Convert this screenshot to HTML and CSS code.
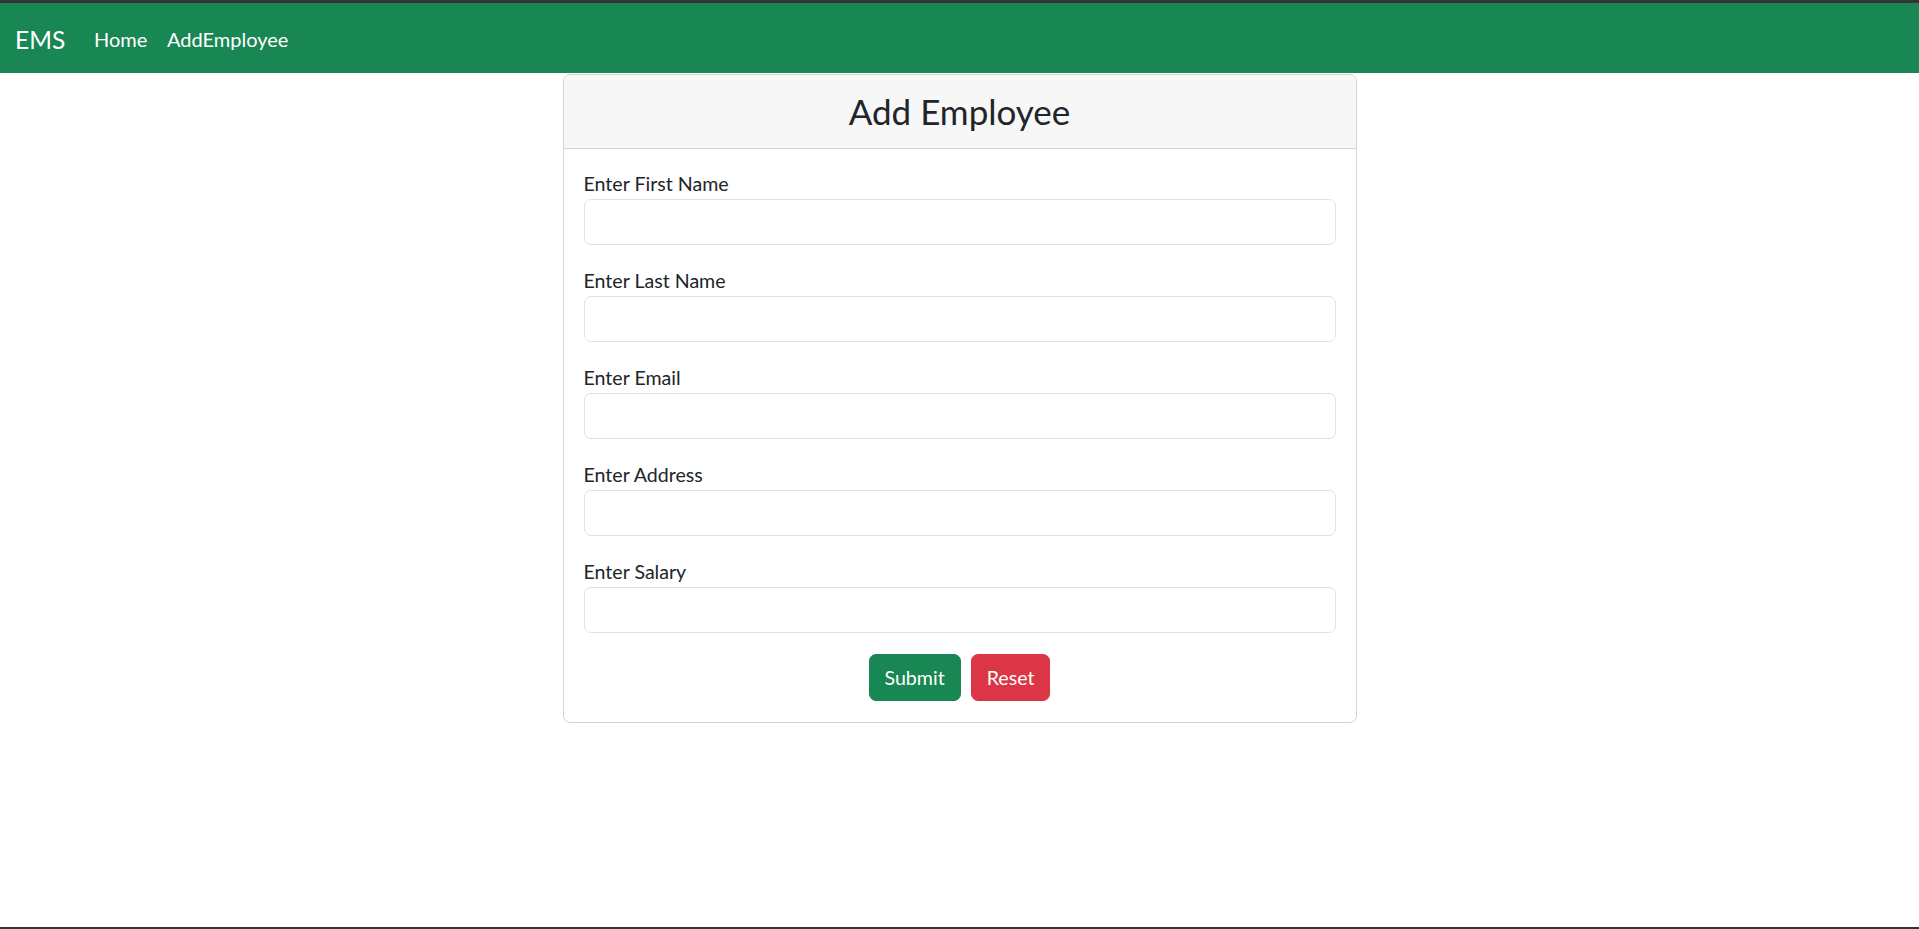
FILE: index.html
```html
<!DOCTYPE html>
<html lang="en">
    <head>
        <title>EMS - Add Employee</title>
        <meta charset="utf-8" name="viewport" content="width=device-width, initial-scale=1">
        <link rel="stylesheet" href="styles.css">
    </head>
    <body>
        <div class="page">
        <nav class="navbar">
            <a class="brand" href="#">EMS</a>
            <a class="nav-link" href="#">Home</a>
            <a class="nav-link" href="#">AddEmployee</a>
        </nav>

        <div class="card">
            <div class="card-header">
                <h3>Add Employee</h3>
            </div>
            <div class="card-body">
                <form>
                    <div class="form-group">
                        <label for="firstName">Enter First Name</label>
                        <input type="text" id="firstName" class="form-control">
                    </div>
                    <div class="form-group">
                        <label for="lastName">Enter Last Name</label>
                        <input type="text" id="lastName" class="form-control">
                    </div>
                    <div class="form-group">
                        <label for="email">Enter Email</label>
                        <input type="email" id="email" class="form-control">
                    </div>
                    <div class="form-group">
                        <label for="address">Enter Address</label>
                        <input type="text" id="address" class="form-control">
                    </div>
                    <div class="form-group">
                        <label for="salary">Enter Salary</label>
                        <input type="text" id="salary" class="form-control">
                    </div>
                    <div class="actions">
                        <button type="submit" class="btn btn-success">Submit</button>
                        <button type="reset" class="btn btn-danger">Reset</button>
                    </div>
                </form>
            </div>
        </div>
        </div>
    </body>
</html>
```

FILE: styles.css
```css
*{
    box-sizing: border-box;
}
body{
    margin: 0;
    font-family: Lato, "Liberation Sans", sans-serif;
    font-size: 19.6px;
    color: #212529;
    background: #fff;
}
.page{
    min-height: 100vh;
    border-top: 3px solid #343434;
    border-bottom: 2px solid #343434;
}
.navbar{
    display: flex;
    align-items: center;
    height: 70px;
    padding: 3px 15px 0;
    background: #198754;
}
.navbar a{
    color: #fff;
    text-decoration: none;
}
.brand{
    font-size: 24.5px;
    line-height: 36px;
    margin-right: 19px;
}
.nav-link{
    font-size: 20px;
    line-height: 29.4px;
    padding: 0 9.8px;
}
.card{
    width: 794px;
    margin: 1px auto 0;
    border: 1px solid #d3d4d5;
    border-radius: 7px;
    background: #fff;
}
.card-header{
    padding: 15px 20px;
    background: #f7f7f7;
    border-bottom: 1px solid #d3d4d5;
    border-radius: 6px 6px 0 0;
    text-align: center;
}
.card-header h3{
    margin: 0;
    font-size: 35px;
    font-weight: 400;
    line-height: 43px;
}
.card-body{
    padding: 20px 20px 21px;
}
.form-group{
    margin-bottom: 20.6px;
}
.form-group:last-of-type{
    margin-bottom: 19.6px;
}
.form-group label{
    display: block;
    line-height: 29.4px;
    margin-bottom: 1px;
}
.form-control{
    display: block;
    width: 100%;
    height: 46px;
    padding: 7px 14.7px;
    font: inherit;
    color: #212529;
    border: 1px solid #dee2e6;
    border-radius: 7px;
    background: #fff;
}
.actions{
    display: flex;
    justify-content: center;
    gap: 10px;
}
.btn{
    height: 47px;
    padding: 0 15px;
    font: inherit;
    line-height: 29.4px;
    color: #fff;
    border: 1px solid transparent;
    border-radius: 7px;
    cursor: pointer;
}
.btn-success{
    background: #198754;
    border-color: #198754;
}
.btn-danger{
    background: #dc3545;
    border-color: #dc3545;
}
```
